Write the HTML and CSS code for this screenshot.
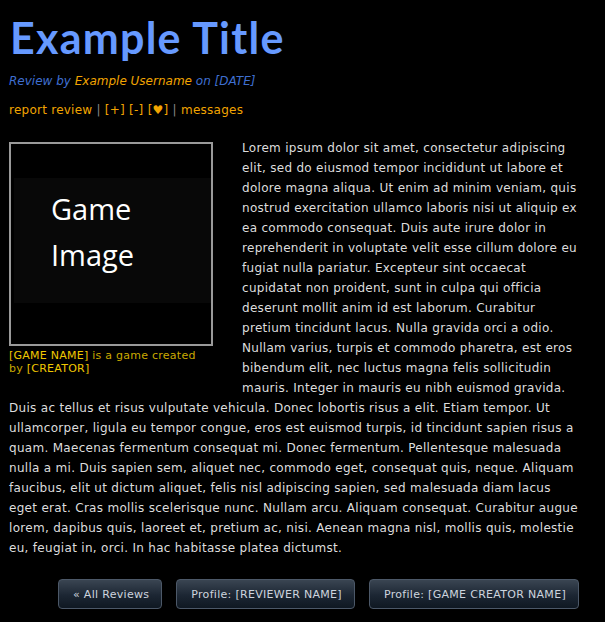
FILE: index.html
```html
<!DOCTYPE html>
<html>
<head>
<meta charset="utf-8">
<link rel="stylesheet" href="styles.css">
</head>
<body>
<div class="page">
  <h1 class="title">Example Title</h1>
  <div class="byline">Review by <span class="user">Example Username</span> on [DATE]</div>
  <div class="links"><span>report review</span> <span class="sep">|</span> <span>[+]</span> <span>[-]</span> <span>[&#9829;]</span> <span class="sep">|</span> <span>messages</span></div>
  <div class="review">
    <div class="figure">
      <div class="image"><div class="image-inner">Game<br>Image</div></div>
      <div class="caption"><span class="hl">[GAME NAME]</span> is a game created by <span class="hl">[CREATOR]</span></div>
    </div>
    <p class="body">Lorem ipsum dolor sit amet, consectetur adipiscing elit, sed do eiusmod tempor incididunt ut labore et dolore magna aliqua. Ut enim ad minim veniam, quis nostrud exercitation ullamco laboris nisi ut aliquip ex ea commodo consequat. Duis aute irure dolor in reprehenderit in voluptate velit esse cillum dolore eu fugiat nulla pariatur. Excepteur sint occaecat cupidatat non proident, sunt in culpa qui officia deserunt mollit anim id est laborum. Curabitur pretium tincidunt lacus. Nulla gravida orci a odio. Nullam varius, turpis et commodo pharetra, est eros bibendum elit, nec luctus magna felis sollicitudin mauris. Integer in mauris eu nibh euismod gravida. Duis ac tellus et risus vulputate vehicula. Donec lobortis risus a elit. Etiam tempor. Ut ullamcorper, ligula eu tempor congue, eros est euismod turpis, id tincidunt sapien risus a quam. Maecenas fermentum consequat mi. Donec fermentum. Pellentesque malesuada nulla a mi. Duis sapien sem, aliquet nec, commodo eget, consequat quis, neque. Aliquam faucibus, elit ut dictum aliquet, felis nisl adipiscing sapien, sed malesuada diam lacus eget erat. Cras mollis scelerisque nunc. Nullam arcu. Aliquam consequat. Curabitur augue lorem, dapibus quis, laoreet et, pretium ac, nisi. Aenean magna nisl, mollis quis, molestie eu, feugiat in, orci. In hac habitasse platea dictumst.</p>
  </div>
  <div class="buttons">
    <a class="btn">&laquo; All Reviews</a>
    <a class="btn">Profile: [REVIEWER NAME]</a>
    <a class="btn">Profile: [GAME CREATOR NAME]</a>
  </div>
</div>
</body>
</html>
```
FILE: styles.css
```css
html, body {
  margin: 0;
  padding: 0;
  background: #000;
}
.page {
  padding: 0 26px 0 9px;
  font-family: "DejaVu Sans", Verdana, sans-serif;
  color: #dddddd;
}
.title {
  margin: 0;
  padding-top: 13px;
  padding-left: 1px;
  font-family: Lato, "Noto Sans", sans-serif;
  font-weight: 700;
  font-size: 43px;
  line-height: 50px;
  letter-spacing: 1.25px;
  color: #6699ff;
}
.byline {
  margin-top: 10px;
  font-size: 12px;
  font-style: italic;
  color: #3f6fd0;
  line-height: 16px;
}
.byline .user { color: #f2a400; }
.links {
  margin-top: 13px;
  font-size: 12px;
  letter-spacing: 0.25px;
  line-height: 16px;
  color: #f2a400;
}
.links .sep { color: #888; }
.review {
  margin-top: 20px;
}
.figure {
  float: left;
  width: 204px;
  margin: 4px 29px 6px 0;
}
.image {
  box-sizing: border-box;
  width: 204px;
  height: 204px;
  border: 2px solid #9a9a9a;
  background: #000;
  display: flex;
  align-items: center;
  justify-content: flex-end;
}
.image-inner {
  box-sizing: border-box;
  width: 197px;
  height: 125px;
  margin-top: -7px;
  background: #080808;
  color: #fff;
  font-family: "Open Sans", sans-serif;
  font-size: 29px;
  line-height: 46px;
  padding: 8px 0 0 37px;
}
.caption {
  margin-top: 3px;
  font-size: 11px;
  line-height: 13px;
  letter-spacing: 0.25px;
  color: #c9a800;
}
.caption .hl { color: #f0c800; }
.body {
  margin: 0;
  font-size: 12px;
  line-height: 20px;
  letter-spacing: 0.3px;
}
.buttons {
  clear: both;
  display: flex;
  justify-content: flex-end;
  gap: 14px;
  margin-top: 21px;
}
.btn {
  box-sizing: border-box;
  height: 30px;
  padding: 0 12px 0 14px;
  display: flex;
  align-items: center;
  border: 1px solid #4c5868;
  border-radius: 4px;
  background: linear-gradient(#3a4552, #1c2633 55%, #0f1822);
  color: #cdd4de;
  font-size: 11px;
  letter-spacing: 0.3px;
}
```
